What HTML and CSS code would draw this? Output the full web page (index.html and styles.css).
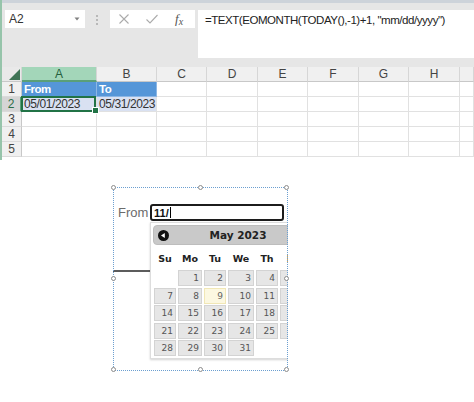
FILE: index.html
```html
<!DOCTYPE html>
<html>
<head>
<meta charset="utf-8">
<link rel="stylesheet" href="styles.css">
</head>
<body>
<div class="excel">
  <div class="fbar">
    <div class="namebox"><span>A2</span><svg width="6" height="4" viewBox="0 0 6 4"><path d="M0.5 0.5H5.5L3 3.5Z" fill="#808080"/></svg></div>
    <div class="grip"><i></i><i></i><i></i></div>
    <div class="fnbtns">
      <svg class="ic-x" width="12" height="12" viewBox="0 0 12 12"><path d="M1.5 1.5L10.5 10.5M10.5 1.5L1.5 10.5" stroke="#ababab" stroke-width="1.1"/></svg>
      <svg class="ic-ok" width="14" height="12" viewBox="0 0 14 12"><path d="M1.5 6.5L5 10L12.5 2" stroke="#ababab" stroke-width="1.1" fill="none"/></svg>
      <span class="fx">f<span class="fx-x">x</span></span>
    </div>
    <div class="formula">=TEXT(EOMONTH(TODAY(),-1)+1, "mm/dd/yyyy")</div>
  </div>
  <div class="sheet">
    <div class="hd corner"><svg width="11" height="11" viewBox="0 0 11 11"><path d="M11 0V11H0Z" fill="#3f7455"/></svg></div>
    <div class="hd csel">A</div>
    <div class="hd">B</div>
    <div class="hd">C</div>
    <div class="hd">D</div>
    <div class="hd">E</div>
    <div class="hd">F</div>
    <div class="hd">G</div>
    <div class="hd">H</div>
    <div class="hd"></div>

    <div class="rh">1</div>
    <div class="c blue">From</div><div class="c blue">To</div>
    <div class="c"></div><div class="c"></div><div class="c"></div><div class="c"></div><div class="c"></div><div class="c"></div><div class="c"></div>

    <div class="rh rsel">2</div>
    <div class="c lb cur">05/01/2023</div><div class="c lb">05/31/2023</div>
    <div class="c"></div><div class="c"></div><div class="c"></div><div class="c"></div><div class="c"></div><div class="c"></div><div class="c"></div>

    <div class="rh">3</div>
    <div class="c"></div><div class="c"></div><div class="c"></div><div class="c"></div><div class="c"></div><div class="c"></div><div class="c"></div><div class="c"></div><div class="c"></div>

    <div class="rh">4</div>
    <div class="c"></div><div class="c"></div><div class="c"></div><div class="c"></div><div class="c"></div><div class="c"></div><div class="c"></div><div class="c"></div><div class="c"></div>

    <div class="rh">5</div>
    <div class="c"></div><div class="c"></div><div class="c"></div><div class="c"></div><div class="c"></div><div class="c"></div><div class="c"></div><div class="c"></div><div class="c"></div>
  </div>
</div>

<div class="stage">
  <div class="frame">
    <div class="clip">
      <div class="field">
        <span class="lbl">From</span>
        <div class="input"><span>11/</span><i class="caret"></i></div>
      </div>
      <div class="hline"></div>
      <div class="dp">
        <div class="dp-head">
          <svg class="prev" width="11" height="11" viewBox="0 0 11 11"><circle cx="5.5" cy="5.5" r="5.5" fill="#111"/><path d="M3 5.5L6.8 3V8Z" fill="#fff"/></svg>
          <span class="dp-title">May 2023</span>
          <span></span>
        </div>
        <div class="dp-grid dp-names">
          <span>Su</span><span>Mo</span><span>Tu</span><span>We</span><span>Th</span><span>Fr</span><span>Sa</span>
        </div>
        <div class="dp-grid dp-days">
          <span class="empty"></span><span>1</span><span>2</span><span>3</span><span>4</span><span>5</span><span>6</span>
          <span>7</span><span>8</span><span class="today">9</span><span>10</span><span>11</span><span>12</span><span>13</span>
          <span>14</span><span>15</span><span>16</span><span>17</span><span>18</span><span>19</span><span>20</span>
          <span>21</span><span>22</span><span>23</span><span>24</span><span>25</span><span>26</span><span>27</span>
          <span>28</span><span>29</span><span>30</span><span>31</span>
        </div>
      </div>
    </div>
    <div class="selbox">
      <i class="hdl h-tl"></i><i class="hdl h-tm"></i><i class="hdl h-tr"></i>
      <i class="hdl h-ml"></i><i class="hdl h-mr"></i>
      <i class="hdl h-bl"></i><i class="hdl h-bm"></i><i class="hdl h-br"></i>
    </div>
  </div>
</div>
</body>
</html>
```

FILE: styles.css
```css
* { box-sizing: border-box; }

body {
  margin: 0;
  width: 474px;
  height: 402px;
  overflow: hidden;
  background: #fff;
  font-family: "Liberation Sans", Arial, sans-serif;
}

/* ---------- Excel part ---------- */
.excel {
  border-left: 2px solid #96c4aa;
}

.fbar {
  display: flex;
  align-items: flex-start;
  height: 67px;
  padding-top: 7px;
  background: #e6e6e6;
  border-top: 3px solid #cdd3da;
}

.namebox {
  display: flex;
  align-items: center;
  justify-content: space-between;
  width: 80px;
  height: 18px;
  margin-left: 3px;
  padding: 0 5px 0 4px;
  background: #fff;
  font-size: 12px;
  color: #333;
}

.grip {
  display: flex;
  flex-direction: column;
  gap: 2px;
  margin: 5px 0 0 11px;
}
.grip i {
  display: block;
  width: 2px;
  height: 2px;
  background: #b8b8b8;
}

.fnbtns {
  display: flex;
  align-items: center;
  width: 85px;
  height: 18px;
  margin-left: 12px;
  background: #fff;
}
.ic-x { margin-left: 8px; }
.ic-ok { margin-left: 15px; }
.fx {
  margin-left: 16px;
  font-family: "Liberation Serif", serif;
  font-style: italic;
  font-size: 13px;
  color: #555;
  line-height: 12px;
}
.fx-x { font-size: 10px; position: relative; top: 2px; }

.formula {
  flex: 1;
  height: 48px;
  margin-left: 3px;
  padding: 4px 0 0 7px;
  background: #fff;
  font-size: 11.5px;
  letter-spacing: -0.45px;
  color: #222;
  white-space: nowrap;
}

.sheet {
  display: grid;
  grid-template-columns: 20px 75px 60px 50px 51px 50px 51px 50px 51px 1fr;
  grid-template-rows: repeat(6, 15px);
  padding-bottom: 3px;
  font-size: 12px;
}

.hd {
  background: #f0f0f0;
  border-right: 1px solid #d6d6d6;
  border-bottom: 1px solid #c8c8c8;
  color: #444;
  text-align: center;
  line-height: 14px;
}
.hd.corner {
  display: flex;
  justify-content: flex-end;
  align-items: flex-end;
  padding: 0 1px 1px 0;
  background: #e9e9e9;
}
.hd.csel {
  background: #a3d6b9;
  border-bottom: 2px solid #5a9f78;
  color: #245f3d;
}

.rh {
  background: #f0f0f0;
  border-right: 1px solid #c8c8c8;
  border-bottom: 1px solid #dadada;
  color: #444;
  text-align: center;
  line-height: 14px;
}
.rh.rsel {
  background: #d5d5d5;
  color: #2c6f49;
  border-right: 2px solid #5a9f78;
}

.c {
  border-right: 1px solid #e1e1e1;
  border-bottom: 1px solid #e1e1e1;
  padding-left: 2px;
  line-height: 14px;
  font-size: 12px;
  letter-spacing: -0.4px;
  color: #333;
  white-space: nowrap;
}
.c.blue {
  background: #5596d8;
  border-color: #5596d8 #8cb6e4 #8cb6e4 #5596d8;
  color: #fff;
  font-weight: bold;
  font-size: 11.5px;
  letter-spacing: -0.5px;
}
.c.lb { background: #d9e1f2; }
.c.cur {
  position: relative;
}
.c.cur::before {
  content: "";
  position: absolute;
  inset: -1px 0 -1px -1px;
  border: 2px solid #217346;
}
.c.cur::after {
  content: "";
  position: absolute;
  right: -3px;
  bottom: -3px;
  width: 5px;
  height: 5px;
  background: #217346;
  border: 1px solid #fff;
}

/* ---------- date widget ---------- */
.stage {
  padding: 27px 0 0 113px;
}

.frame {
  position: relative;
  width: 175px;
  height: 184px;
}

.clip {
  position: relative;
  width: 100%;
  height: 100%;
  overflow: hidden;
  padding: 17px 0 0 5px;
}

.field {
  display: flex;
  align-items: center;
}
.lbl {
  width: 32px;
  font-size: 13px;
  color: #6b6b6b;
  line-height: 17px;
}
.input {
  display: flex;
  align-items: center;
  width: 134px;
  height: 17px;
  padding-left: 2px;
  border: 2px solid #1c1c1c;
  border-radius: 3px;
  font-size: 11px;
  font-weight: bold;
  color: #111;
}
.caret {
  display: block;
  width: 1px;
  height: 11px;
  margin-left: 1px;
  background: #000;
}

.hline {
  width: 37px;
  height: 2px;
  margin: 49px 0 0 -5px;
  background: #5c5c5c;
}

.dp {
  position: absolute;
  left: 37px;
  top: 35px;
  width: 176px;
  height: 137px;
  padding: 2px;
  background: #fff;
  border: 1px solid #dddddd;
  box-shadow: 0 1px 2px rgba(0, 0, 0, 0.18);
  font-family: "DejaVu Sans", Verdana, sans-serif;
}

.dp-head {
  display: grid;
  grid-template-columns: 18px 1fr 18px;
  align-items: center;
  height: 20px;
  background: #c9c9c9;
  border: 1px solid #bdbdbd;
  border-radius: 4px;
}
.prev { margin-left: 4px; }
.dp-title {
  text-align: center;
  font-weight: bold;
  font-size: 10.5px;
  color: #222;
}

.dp-grid {
  display: grid;
  grid-template-columns: 22px 24px 22px 26px 22px 24px 22px;
  column-gap: 2px;
  margin-left: 1px;
}
.dp-names {
  margin-top: 5px;
  height: 16px;
  align-items: center;
  text-align: center;
  font-weight: bold;
  font-size: 9.5px;
  color: #222;
}
.dp-days {
  margin-top: 4px;
  grid-auto-rows: 16px;
  row-gap: 1.5px;
  font-size: 9px;
}
.dp-days span {
  background: #e6e6e6;
  border: 1px solid #d3d3d3;
  color: #555;
  text-align: right;
  padding-right: 2px;
  line-height: 14px;
}
.dp-days span.empty {
  background: none;
  border: none;
}
.dp-days span.today {
  background: #fcf8e1;
  border-color: #f1e7b6;
  color: #666;
}

.selbox {
  position: absolute;
  inset: 0;
  border: 1px dotted #6c9fd0;
  pointer-events: none;
}
.hdl {
  position: absolute;
  width: 5px;
  height: 5px;
  margin: -3px 0 0 -3px;
  border: 1px solid #8c8c8c;
  border-radius: 50%;
  background: #fff;
}
.h-tl { left: 0; top: 0; }
.h-tm { left: 50%; top: 0; }
.h-tr { left: 100%; top: 0; }
.h-ml { left: 0; top: 50%; }
.h-mr { left: 100%; top: 50%; }
.h-bl { left: 0; top: 100%; }
.h-bm { left: 50%; top: 100%; }
.h-br { left: 100%; top: 100%; }
```
